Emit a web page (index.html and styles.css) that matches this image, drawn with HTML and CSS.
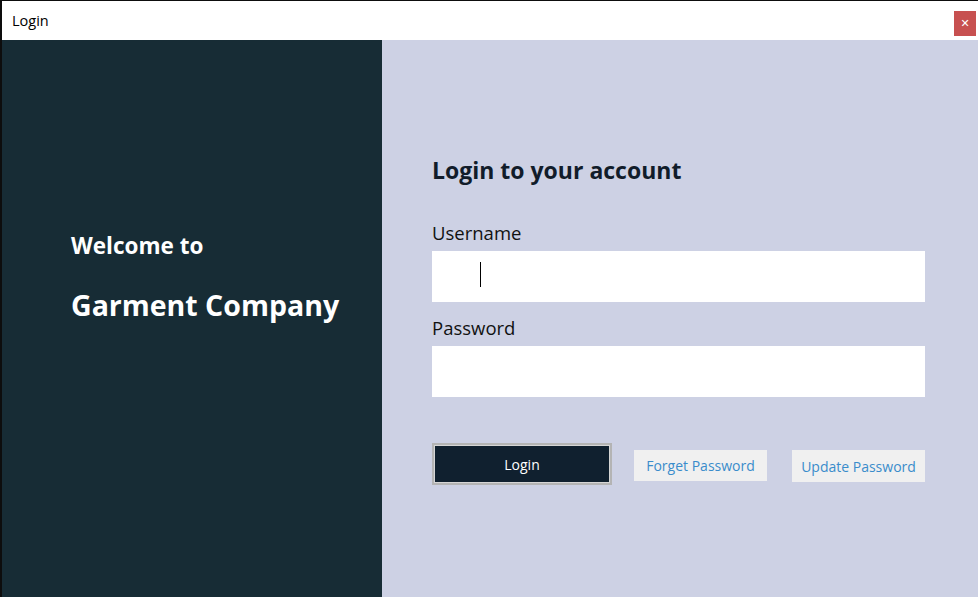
FILE: index.html
```html
<!DOCTYPE html>
<html lang="en">
<head>
<meta charset="UTF-8">
<meta name="viewport" content="width=device-width, initial-scale=1.0">
<title>Login</title>
<link rel="stylesheet" href="styles.css">
</head>
<body>
<div class="window">
    <div class="titlebar">
        <span class="title">Login</span>
        <button class="close-btn">&#x2715;</button>
    </div>
    <div class="content">
        <div class="side">
            <div class="welcome">Welcome to</div>
            <div class="company">Garment Company</div>
        </div>
        <div class="main">
            <h1>Login to your account</h1>
            <label class="field-label">Username</label>
            <div class="field"><span class="caret"></span></div>
            <label class="field-label">Password</label>
            <div class="field"></div>
            <div class="actions">
                <button class="login-btn">Login</button>
                <button class="link-btn forget">Forget Password</button>
                <button class="link-btn update">Update Password</button>
            </div>
        </div>
    </div>
</div>
</body>
</html>
```

FILE: styles.css
```css
body {
    margin: 0;
    padding: 0;
    background-color: #0d0d0d;
    font-family: "Open Sans", "Noto Sans", sans-serif;
    height: 597px;
    overflow: hidden;
}

.window {
    margin: 1px 0 0 2px;
    height: 596px;
    display: flex;
    flex-direction: column;
}

.titlebar {
    height: 39px;
    background-color: #ffffff;
    display: flex;
    align-items: center;
    justify-content: space-between;
    flex-shrink: 0;
}

.title {
    margin-left: 10px;
    font-size: 14.5px;
    color: #000;
}

.close-btn {
    width: 22px;
    height: 25px;
    margin-right: 2px;
    align-self: flex-start;
    margin-top: 10px;
    background-color: #c75050;
    color: #fff;
    border: none;
    padding: 0;
    font-size: 11px;
    font-weight: bold;
    font-family: "DejaVu Sans", sans-serif;
}

.content {
    flex: 1;
    display: flex;
}

.side {
    width: 380px;
    background-color: #172c35;
    color: #fff;
    padding: 191px 0 0 69px;
    box-sizing: border-box;
}

.welcome {
    font-size: 22.5px;
    font-weight: bold;
    line-height: 30px;
}

.company {
    margin-top: 26px;
    font-size: 28.5px;
    font-weight: bold;
    line-height: 36px;
}

.main {
    flex: 1;
    background-color: #cdd1e4;
    padding: 114px 53px 0 50px;
    display: flex;
    flex-direction: column;
}

.main h1 {
    margin: 0;
    font-size: 23px;
    line-height: 32px;
    font-weight: bold;
    color: #111c2a;
}

.field-label {
    font-size: 18.5px;
    line-height: 24px;
    color: #111;
}

.main h1 + .field-label {
    margin-top: 35px;
}

.field {
    height: 51px;
    background-color: #fff;
    margin-top: 6px;
    position: relative;
}

.field + .field-label {
    margin-top: 14px;
}

.caret {
    position: absolute;
    left: 48px;
    top: 11px;
    width: 1px;
    height: 25px;
    background-color: #000;
}

.actions {
    display: flex;
    align-items: flex-start;
    margin-top: 46px;
}

.login-btn {
    width: 180px;
    height: 42px;
    background-color: #10202f;
    border: 2px solid #b4b4b4;
    box-shadow: inset 0 0 0 1px #d6d6d6;
    color: #fff;
    font-family: inherit;
    font-size: 14px;
    padding: 0;
}

.link-btn {
    height: 31px;
    width: 133px;
    margin-top: 7px;
    background-color: #f0f0f0;
    border: none;
    color: #3a8ccb;
    font-family: inherit;
    font-size: 14px;
    padding: 0;
}

.forget {
    margin-left: 22px;
}

.update {
    margin-left: 25px;
    height: 32px;
}
```
